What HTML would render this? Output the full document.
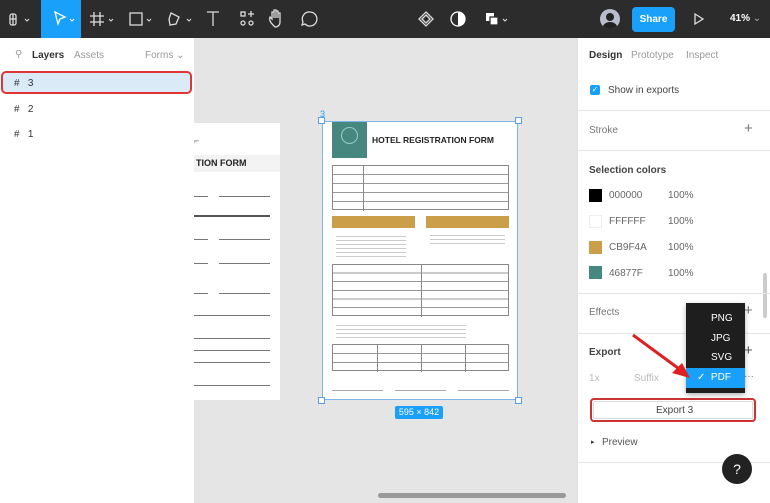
<!DOCTYPE html>
<html><head><style>
*{box-sizing:border-box;margin:0;padding:0}
body{width:770px;height:503px;overflow:hidden;font-family:"Liberation Sans",sans-serif;background:#e5e5e5;position:relative}
.a{position:absolute}
.tb{left:0;top:0;width:770px;height:38px;background:#2c2c2c}
.t{font-size:10px;color:#333}
.g{color:#999}
.line{height:1px;background:#e6e6e6;left:577px;width:193px}
.r{font-size:9px;height:1px;background:#777}
</style></head><body>
<div class="a tb"></div>
<div class="a" style="left:41px;top:0;width:40px;height:38px;background:#18a0fb"></div>
<svg class="a" style="left:0;top:0" width="520" height="38" fill="none" stroke="#ddd" stroke-width="1.3">
<rect x="10" y="14" width="6" height="11" rx="2"/><path d="M13 14v11M10 19h6"/><path d="M25 19l2 2 2-2" stroke-width="1"/>
<path d="M55 12l10 5-5 2-2 5z" stroke="#fff"/><path d="M70 19l2 2 2-2" stroke="#fff" stroke-width="1"/>
<path d="M94 12v14M100 12v14M90 16h14M90 22h14"/><path d="M109 19l2 2 2-2" stroke-width="1"/>
<rect x="130" y="13" width="12" height="12"/><path d="M147 19l2 2 2-2" stroke-width="1"/>
<path d="M171 13l8 4-3 7-6 1-1-6z"/><path d="M187 19l2 2 2-2" stroke-width="1"/>
<path d="M207 12h12M213 12v14"/>
<rect x="241" y="12" width="4" height="4"/><circle cx="243" cy="23" r="2"/><circle cx="251" cy="23" r="2"/><path d="M251 11v6M248 14h6"/>
<path d="M273 25c-3-3-4-6-3-8l2 2v-7l2 0v6-8h2v8-7h2v7-5h2v9c0 3-2 5-5 5z"/>
<path d="M310 12a7 7 0 1 1-5 12l-3 1 1-3a7 7 0 0 1 7-10z"/>
<path d="M426 12l7 7-7 7-7-7z M426 15l4 4-4 4-4-4z"/>
<circle cx="458" cy="19" r="7" fill="none" stroke="#fff"/><path d="M458 12a7 7 0 0 1 0 14z" fill="#fff" stroke="none"/>
<rect x="486" y="13" width="8" height="8" fill="#fff" stroke="none"/><rect x="490" y="17" width="8" height="8" fill="#fff" stroke="#2c2c2c"/><path d="M503 19l2 2 2-2" stroke-width="1"/>
</svg>
<div class="a" style="left:600px;top:9px;width:20px;height:20px;border-radius:50%;background:#b8bccc;overflow:hidden"><div class="a" style="left:6px;top:4px;width:8px;height:8px;border-radius:50%;background:#222"></div><div class="a" style="left:3px;top:13px;width:14px;height:10px;border-radius:50%;background:#222"></div></div>
<div class="a" style="left:632px;top:7px;width:43px;height:25px;background:#18a0fb;border-radius:4px;color:#fff;font-size:10px;font-weight:bold;text-align:center;line-height:25px">Share</div>
<svg class="a" style="left:693px;top:12px" width="12" height="14" fill="none" stroke="#ddd" stroke-width="1.3"><path d="M2 2l8 5-8 5z"/></svg>
<div class="a" style="left:730px;top:13px;color:#fff;font-size:10px;font-weight:bold">41% <span style="font-weight:normal;color:#aaa">⌄</span></div>

<div class="a" style="left:0;top:38px;width:194px;height:465px;background:#fff"></div>
<div class="a t g" style="left:15px;top:49px">⚲</div>
<div class="a t" style="left:32px;top:50px;font-weight:bold;color:#333">Layers</div>
<div class="a t g" style="left:74px;top:50px">Assets</div>
<div class="a t g" style="left:145px;top:50px">Forms ⌄</div>
<div class="a" style="left:1px;top:71px;width:191px;height:23px;background:#dbeaf7;border:2px solid #e03535;border-radius:5px"></div>
<div class="a t" style="left:14px;top:78px">#&nbsp;&nbsp;&nbsp;3</div>
<div class="a t" style="left:14px;top:104px">#&nbsp;&nbsp;&nbsp;2</div>
<div class="a t" style="left:14px;top:129px">#&nbsp;&nbsp;&nbsp;1</div>

<!-- page 2 partial -->
<div class="a" style="left:194px;top:123px;width:86px;height:277px;background:#fff"></div>
<div class="a" style="left:194px;top:155px;width:86px;height:17px;background:#f3f3f3"></div>
<div class="a" style="left:196px;top:158px;font-size:9px;font-weight:bold;color:#222">TION FORM</div>
<div class="a" style="left:194px;top:138px;font-size:4px;color:#666">prt</div>
<div class="a r" style="left:194px;top:196px;width:14px"></div><div class="a r" style="left:219px;top:196px;width:51px"></div>
<div class="a" style="left:194px;top:215px;width:76px;height:2px;background:#555"></div>
<div class="a r" style="left:194px;top:239px;width:14px"></div><div class="a r" style="left:219px;top:239px;width:51px"></div>
<div class="a r" style="left:194px;top:263px;width:14px"></div><div class="a r" style="left:219px;top:263px;width:51px"></div>
<div class="a r" style="left:194px;top:293px;width:14px"></div><div class="a r" style="left:219px;top:293px;width:51px"></div>
<div class="a r" style="left:194px;top:315px;width:76px"></div>
<div class="a r" style="left:194px;top:338px;width:76px"></div>
<div class="a r" style="left:194px;top:350px;width:76px"></div>
<div class="a r" style="left:194px;top:362px;width:76px"></div>
<div class="a r" style="left:194px;top:385px;width:76px"></div>

<!-- page 3 -->
<div class="a" style="left:322px;top:121px;width:196px;height:279px;background:#fff;border:1px solid #7fb6e8"></div>
<div class="a" style="left:318px;top:117px;width:7px;height:7px;background:#fff;border:1px solid #5aa0e0"></div>
<div class="a" style="left:515px;top:117px;width:7px;height:7px;background:#fff;border:1px solid #5aa0e0"></div>
<div class="a" style="left:318px;top:397px;width:7px;height:7px;background:#fff;border:1px solid #5aa0e0"></div>
<div class="a" style="left:515px;top:397px;width:7px;height:7px;background:#fff;border:1px solid #5aa0e0"></div>
<div class="a" style="left:320px;top:109px;font-size:9px;color:#18a0fb">3</div>
<div class="a" style="left:332px;top:122px;width:35px;height:36px;background:#46877f"><div class="a" style="left:9px;top:5px;width:17px;height:17px;border:1px solid #9cc;border-radius:50%"></div></div>
<div class="a" style="left:372px;top:135px;font-size:8.5px;font-weight:bold;color:#222">HOTEL REGISTRATION FORM</div>
<div class="a" style="left:332px;top:165px;width:177px;height:45px;border:1px solid #888;background:repeating-linear-gradient(#fff 0 8px,#999 8px 9px)"><div class="a" style="left:30px;top:0;width:1px;height:45px;background:#888"></div></div>
<div class="a" style="left:332px;top:216px;width:83px;height:12px;background:#cb9f4a"></div>
<div class="a" style="left:426px;top:216px;width:83px;height:12px;background:#cb9f4a"></div>
<div class="a" style="left:336px;top:233px;width:70px;height:24px;background:repeating-linear-gradient(#fff 0 3px,#ccc 3px 4px)"></div>
<div class="a" style="left:430px;top:232px;width:75px;height:14px;background:repeating-linear-gradient(#fff 0 3px,#ccc 3px 4px)"></div>
<div class="a" style="left:332px;top:264px;width:177px;height:52px;border:1px solid #888;background:repeating-linear-gradient(#fff 0 7.6px,#999 7.6px 8.6px)"><div class="a" style="left:88px;top:0;width:1px;height:52px;background:#888"></div></div>
<div class="a" style="left:336px;top:322px;width:130px;height:18px;background:repeating-linear-gradient(#fff 0 3px,#ccc 3px 4px)"></div>
<div class="a" style="left:332px;top:344px;width:177px;height:27px;border:1px solid #888;background:repeating-linear-gradient(#fff 0 8px,#999 8px 9px)"><div class="a" style="left:44px;top:0;width:1px;height:27px;background:#888"></div><div class="a" style="left:88px;top:0;width:1px;height:27px;background:#888"></div><div class="a" style="left:132px;top:0;width:1px;height:27px;background:#888"></div></div>
<div class="a r" style="left:332px;top:390px;width:51px;background:#aaa"></div>
<div class="a r" style="left:395px;top:390px;width:51px;background:#aaa"></div>
<div class="a r" style="left:458px;top:390px;width:51px;background:#aaa"></div>
<div class="a" style="left:395px;top:406px;width:48px;height:13px;background:#18a0fb;border-radius:2px;color:#fff;font-size:9px;text-align:center;line-height:13px">595 × 842</div>
<div class="a" style="left:378px;top:493px;width:188px;height:5px;border-radius:3px;background:#999"></div>

<!-- right panel -->
<div class="a" style="left:577px;top:38px;width:193px;height:465px;background:#fff;border-left:1px solid #e0e0e0"></div>
<div class="a t" style="left:589px;top:50px;font-weight:bold">Design</div>
<div class="a t g" style="left:631px;top:50px">Prototype</div>
<div class="a t g" style="left:686px;top:50px">Inspect</div>
<div class="a" style="left:590px;top:85px;width:10px;height:10px;background:#18a0fb;border-radius:2px;color:#fff;font-size:8px;line-height:10px;text-align:center">✓</div>
<div class="a t" style="left:608px;top:85px;color:#444">Show in exports</div>
<div class="a line" style="top:110px"></div>
<div class="a t g" style="left:589px;top:125px;color:#777">Stroke</div>
<div class="a" style="left:744px;top:120px;font-size:15px;color:#777">+</div>
<div class="a line" style="top:150px"></div>
<div class="a t" style="left:589px;top:165px;font-weight:bold;color:#444">Selection colors</div>
<div class="a" style="left:589px;top:189px;width:13px;height:13px;background:#000"></div>
<div class="a t g" style="left:609px;top:190px;color:#666">000000</div><div class="a t g" style="left:668px;top:190px;color:#666">100%</div>
<div class="a" style="left:589px;top:215px;width:13px;height:13px;background:#fff;border:1px solid #eee"></div>
<div class="a t g" style="left:609px;top:216px;color:#666">FFFFFF</div><div class="a t g" style="left:668px;top:216px;color:#666">100%</div>
<div class="a" style="left:589px;top:241px;width:13px;height:13px;background:#cb9f4a"></div>
<div class="a t g" style="left:609px;top:242px;color:#666">CB9F4A</div><div class="a t g" style="left:668px;top:242px;color:#666">100%</div>
<div class="a" style="left:589px;top:266px;width:13px;height:13px;background:#46877f"></div>
<div class="a t g" style="left:609px;top:268px;color:#666">46877F</div><div class="a t g" style="left:668px;top:268px;color:#666">100%</div>
<div class="a" style="left:763px;top:273px;width:4px;height:45px;background:#ccc;border-radius:2px"></div>
<div class="a line" style="top:293px"></div>
<div class="a t g" style="left:589px;top:307px;color:#777">Effects</div>
<div class="a" style="left:744px;top:302px;font-size:15px;color:#777">+</div>
<div class="a line" style="top:333px"></div>
<div class="a t" style="left:589px;top:347px;font-weight:bold;color:#444">Export</div>
<div class="a" style="left:744px;top:342px;font-size:15px;color:#555">+</div>
<div class="a t" style="left:589px;top:373px;color:#bbb">1x</div>
<div class="a t" style="left:634px;top:373px;color:#bbb">Suffix</div>
<div class="a" style="left:744px;top:371px;font-size:10px;color:#777">···</div>
<div class="a" style="left:590px;top:398px;width:166px;height:24px;border:2px solid #c33;border-radius:4px;box-shadow:inset 0 0 0 1px #fff,inset 0 0 0 2px #ddd"></div>
<div class="a t" style="left:656px;top:405px;color:#444">Export 3</div>
<div class="a" style="left:591px;top:438px;font-size:7px;color:#333">▸</div>
<div class="a t" style="left:602px;top:437px;color:#555">Preview</div>
<div class="a line" style="top:462px"></div>
<div class="a" style="left:722px;top:454px;width:30px;height:30px;border-radius:50%;background:#222;color:#fff;font-size:14px;text-align:center;line-height:30px">?</div>

<!-- dropdown -->
<div class="a" style="left:686px;top:303px;width:59px;height:90px;background:#1e1e1e;box-shadow:0 2px 5px rgba(0,0,0,.3)"></div>
<div class="a" style="left:686px;top:368px;width:59px;height:20px;background:#18a0fb"></div>
<div class="a" style="left:711px;top:313px;font-size:10px;color:#fff">PNG</div>
<div class="a" style="left:711px;top:333px;font-size:10px;color:#fff">JPG</div>
<div class="a" style="left:711px;top:352px;font-size:10px;color:#fff">SVG</div>
<div class="a" style="left:697px;top:372px;font-size:10px;color:#fff">✓&nbsp;&nbsp;PDF</div>
<svg class="a" style="left:630px;top:330px" width="70" height="55"><path d="M3 5L52 41" stroke="#e02020" stroke-width="3"/><path d="M60 48L42 43L52 33z" fill="#e02020"/></svg>
</body></html>
